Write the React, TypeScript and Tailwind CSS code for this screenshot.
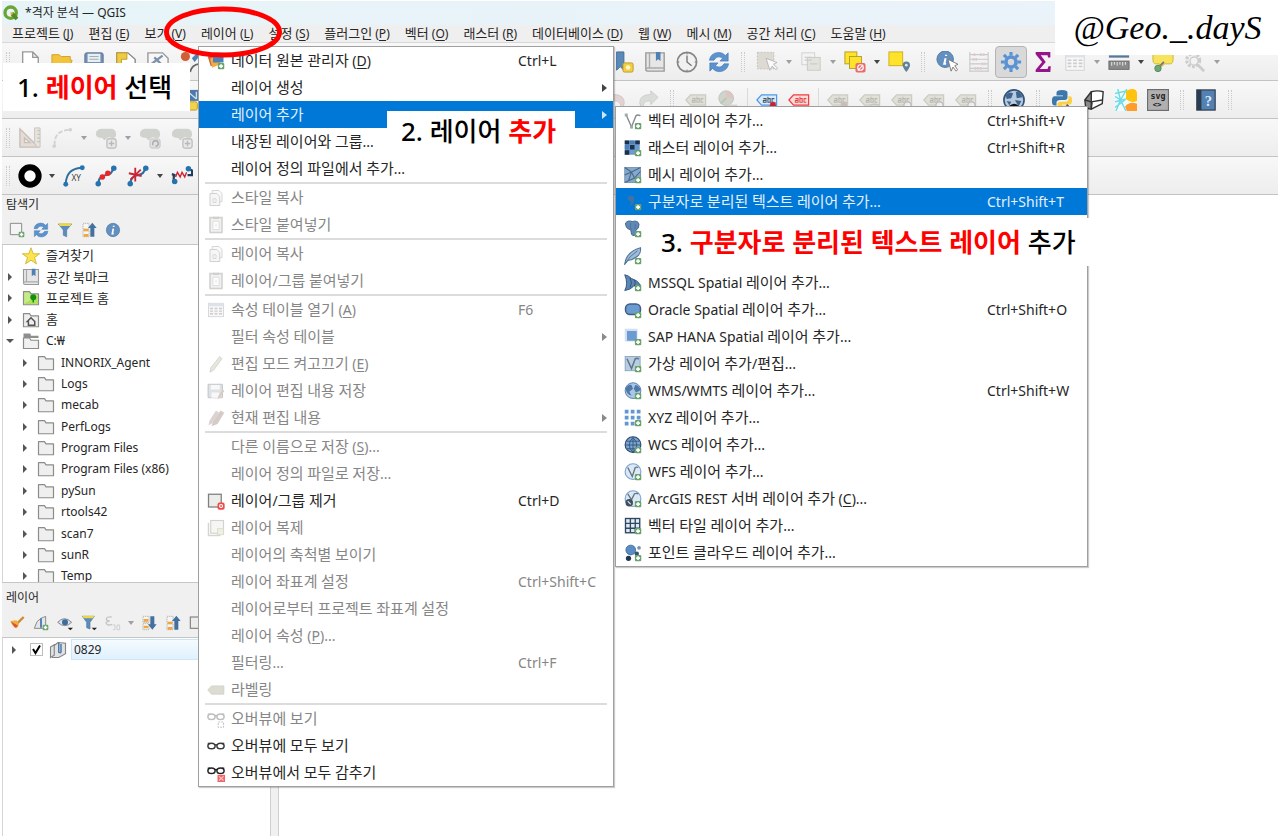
import React, { useState } from "react";

type IconFn = () => React.ReactNode;

/* Small green "add" badge in the lower right corner of a layer icon */
const Plus = () => (
  <>
    <rect x="14.5" y="14.5" width="8.5" height="8.5" rx="1.5" fill="#6aa36c" />
    <path d="M18.75 16.2v5.1M16.2 18.75h5.1" stroke="#fff" strokeWidth="2.2" />
  </>
);

const tag = (fill: string, stroke: string, text: string, extra?: React.ReactNode) => () => (
  <>
    <path d="M1 12 6 6.500h16.500v11H6z" fill={fill} stroke={stroke} strokeWidth="1.3" />
    <path d="M8 10.500h3v4H8v-2h3M13 8.500v6h2.500v-4H13M20 10.500h-2.500v4H20" fill="none" stroke={text} strokeWidth="1.1" />
    {extra}
  </>
);

const folder = (inner?: React.ReactNode, fill = "#efefef") => () => (
  <>
    <path d="M2 3.500h8l2 3h10v14.500H2z" fill={fill} stroke="#8c8c88" strokeWidth="1.6" strokeLinejoin="round" />
    {inner}
  </>
);

const glasses = (c: string, extra?: React.ReactNode) => () => (
  <>
    <path d="M1 5.500h3M20 5.500h3M10.500 8q1.500-1.600 3 0" stroke={c} strokeWidth="2" fill="none" />
    <ellipse cx="6" cy="9" rx="4.800" ry="3.800" fill="none" stroke={c} strokeWidth="2" />
    <ellipse cx="18" cy="9" rx="4.800" ry="3.800" fill="none" stroke={c} strokeWidth="2" />
    {extra}
  </>
);

const globeLines = "M2 12h20M12 2v20M12 2q-10 10 0 20M12 2q10 10 0 20M4 7h16M4 17h16";

const icons: Record<string, IconFn> = {
  newDoc: () => <path d="M4 1h11l6 6v16H4zM15 1v6h6" fill="#fff" stroke="#999" strokeWidth="1.500" />,
  open: () => <path d="M1 4h8l2 2h10v4h2l-3 11H1z" fill="#f3c33c" stroke="#cfa02a" />,
  save: () => (
    <>
      <rect x="2" y="2" width="20" height="20" rx="2" fill="#7190b3" stroke="#56718f" />
      <rect x="5" y="3" width="14" height="9" fill="#e8eef4" />
      <path d="M7 6h10M7 9h10" stroke="#9aa" />
    </>
  ),
  layout: () => (
    <>
      <path d="M2 2h12l8 7v13H2z" fill="#fff" stroke="#888" strokeWidth="1.500" />
      <path d="M2 2h11v7H7v13H2z" fill="#f1cb3f" stroke="#b9982c" />
    </>
  ),
  layoutMgr: () => (
    <>
      <path d="M1 2h16l6 6v14H1z" fill="#f7f7f7" stroke="#999" strokeWidth="1.500" />
      <path d="m5 14 12-9M8 7l9 9" stroke="#7b92a8" strokeWidth="2.500" />
    </>
  ),
  style: () => (
    <>
      <circle cx="7" cy="6" r="5" fill="#cf5f36" />
      <path d="m14 8 6-6 3 3-6 7z" fill="#4b81b4" />
      <path d="M12 23q2-8 10-9" stroke="#666" strokeWidth="2" fill="none" />
    </>
  ),
  bookmarkNew: () => (
    <>
      <path d="M5 1h8v20l-4-4-4 4z" fill="#5c8ab8" stroke="#3f6b97" />
      <rect x="12" y="13" width="11" height="10" rx="1.500" fill="#f4cf3d" stroke="#b9982c" />
      <circle cx="17.500" cy="18" r="2.500" fill="#fff7cf" />
    </>
  ),
  book: () => (
    <>
      <path d="M2 2h20v20H4q-2 0-2-2z" fill="#e6e6e6" stroke="#999" strokeWidth="1.500" />
      <path d="M6 2v17M2 20q0-1.500 2-1.500h18" stroke="#aaa" strokeWidth="1.500" fill="none" />
      <path d="M13 1h5v10l-2.500-2-2.500 2z" fill="#4f80b2" />
    </>
  ),
  clock: () => (
    <>
      <circle cx="12" cy="12" r="10.500" fill="#f1f1f1" stroke="#858585" strokeWidth="1.800" />
      <path d="M12 5v7l5 4M12 2.500v1M12 20.500v1M2.500 12h1M20.500 12h1" stroke="#777" strokeWidth="1.500" fill="none" />
    </>
  ),
  refresh: () => (
    <g fill="#5b93cf" stroke="#4278b5" strokeWidth="0.700">
      <path d="M1.500 10Q3 2 11.500 1.500 16 1.500 19 5l3-3v9h-9l3-3q-6-4-9.500 2z" />
      <path d="M22.500 14q-1.500 8-10 8.500Q8 22.500 5 19l-3 3v-9h9l-3 3q6 4 9.500-2z" />
    </g>
  ),
  select: () => (
    <>
      <rect x="1.500" y="1.500" width="18" height="18" fill="#dcdad3" stroke="#c2c0ba" strokeDasharray="2 1.500" />
      <path d="m11 8 4 13 2.500-4.500 4.500 4 1.500-2-4.500-4 4-2z" fill="#fafafa" stroke="#b5b5b5" />
    </>
  ),
  selectForm: () => (
    <>
      <rect x="2" y="2" width="14" height="13" fill="#f3f3f3" stroke="#cfcfcf" />
      <rect x="8" y="7" width="14" height="14" fill="#e3e2dc" stroke="#c8c8c4" />
      <path d="M5 7h8M5 10h8M11 14h8" stroke="#ccc" strokeWidth="1.500" />
    </>
  ),
  deselect: () => (
    <>
      <rect x="1" y="1" width="13" height="13" fill="#ffe32b" stroke="#b39c22" />
      <rect x="6" y="6" width="13" height="13" fill="#ffe32b" stroke="#b39c22" />
      <rect x="12.500" y="13" width="11" height="10.500" rx="2" fill="#e86a6a" />
      <circle cx="18" cy="18" r="3" fill="none" stroke="#fff" strokeWidth="1.300" />
      <path d="m15 21.500 6-6.500" stroke="#fff" strokeWidth="1.200" />
    </>
  ),
  selectPin: () => (
    <>
      <rect x="1" y="1" width="15" height="15" fill="#ffe32b" stroke="#c9ad22" />
      <path d="M20 23q-4-5-4-7.500a4 4 0 0 1 8 0Q24 18 20 23z" fill="#5f8294" />
      <circle cx="20" cy="15.500" r="1.500" fill="#dfe8ec" />
    </>
  ),
  identify: () => (
    <>
      <circle cx="10" cy="9" r="9" fill="#6490c0" stroke="#4c78a8" />
      <path d="M11 4v1.500M10.500 8l-1.500 6h2" stroke="#fff" strokeWidth="2.200" fill="none" />
      <path d="m13 9 3.500 13 2-4.500 3.500 4.500 1.500-1.500-3-4.500 3.500-1.500z" fill="#fff" stroke="#777" />
    </>
  ),
  abacus: () => (
    <>
      <path d="M2 1v22M22 1v22M2 4h20M2 9h20M2 14h20M2 19h20M2 22h20" stroke="#c9c9c9" strokeWidth="1.200" />
      <path d="M6 4h3M13 4h5M5 9h6M15 14h4M7 19h8" stroke="#dfcaca" strokeWidth="3" strokeDasharray="2 1" />
    </>
  ),
  gear: () => (
    <g fill="none" stroke="#5a93d4">
      <circle cx="12" cy="12" r="5.500" strokeWidth="4" />
      <path d="M12 1v4M12 19v4M1 12h4M19 12h4M4.200 4.200 7 7M17 17l2.800 2.800M4.200 19.800 7 17M17 7l2.800-2.800" strokeWidth="3.400" />
    </g>
  ),
  sigma: () => <path d="M4 1h16v6h-2.500l-.5-2.500H9.500L15 12l-6.500 7.500H17l1-3h2.500L20 23H4v-2.500L11 12 4 3.500z" fill="#96148c" />,
  table: () => (
    <>
      <rect x="2" y="3" width="20" height="18" fill="#f7f7f7" stroke="#ccd0d4" />
      <rect x="2" y="3" width="20" height="4" fill="#dde3e8" />
      <path d="M4 10h4M10 10h4M16 10h4M4 13.500h4M10 13.500h4M16 13.500h4M4 17h4M10 17h4M16 17h4" stroke="#ccc" strokeWidth="1.700" />
    </>
  ),
  measure: () => (
    <>
      <path d="M1 6h22" stroke="#56789b" strokeWidth="2.500" />
      <rect x="1" y="11" width="22" height="9" fill="#8a8a8a" stroke="#666" />
      <path d="M4 12v4M7 12v3M10 12v4M13 12v3M16 12v4M19 12v3" stroke="#ddd" strokeWidth="1.200" />
    </>
  ),
  tip: () => (
    <>
      <path d="M4 0h16q3 0 3 4v5q0 5-3 5h-6l-6 5v-5H4q-3 0-3-5V4q0-4 3-4z" fill="#f8e45c" stroke="#c9b23a" />
      <circle cx="6.500" cy="19" r="3.500" fill="#6fa874" stroke="#4f8a56" />
      <path d="m9 16 4-4" stroke="#777" strokeWidth="2" />
    </>
  ),
  zoomGear: () => (
    <g fill="none" stroke="#cdcdcd">
      <circle cx="10" cy="10" r="7" strokeWidth="3.500" strokeDasharray="3 1.500" />
      <circle cx="11" cy="11" r="4.500" strokeWidth="1.500" />
      <path d="m15 15 7 7" strokeWidth="3" />
    </g>
  ),
  zoomYellow: () => (
    <>
      <circle cx="10" cy="9" r="7" fill="#eee" stroke="#888" strokeWidth="2" />
      <path d="M12 20h9v4h-9z" fill="#f0cf53" />
    </>
  ),
  zoomGreen: () => (
    <>
      <circle cx="10" cy="9" r="7" fill="#eee" stroke="#888" strokeWidth="2" />
      <path d="M14 20h8v4h-8z" fill="#a8c8a8" />
    </>
  ),
  blueYellow: () => (
    <>
      <rect x="7" y="1" width="16" height="12" fill="#4c79aa" />
      <path d="m11 4 8 7M19 3v8" stroke="#cfe0f0" strokeWidth="1.500" />
      <rect x="9" y="14" width="11" height="9" rx="2" fill="#f3d34c" stroke="#b9982c" />
    </>
  ),
  undo: () => <path d="M1 9 9 2v4q12 0 12 9 0 4-4 7 2-10-8-9v4z" fill="#e2d4d4" stroke="#d2c4c4" />,
  redo: () => <path d="M23 9 15 2v4Q3 6 3 15q0 4 4 7-2-10 8-9v4z" fill="#d9dcd9" stroke="#cbcfcb" />,
  labelGrey: tag("#e1e0d8", "#cbcac2", "#b9b8b0"),
  labelMove: tag("#e1e0d8", "#cbcac2", "#b9b8b0", <rect x="15" y="14" width="7" height="7" rx="1" fill="#c9bcbc" />),
  labelShow: tag("#e1e0d8", "#cbcac2", "#b9b8b0", <ellipse cx="17" cy="19" rx="5" ry="2.500" fill="#d6d6d6" stroke="#bbb" />),
  labelCircle: tag("#e1e0d8", "#cbcac2", "#b9b8b0", <circle cx="18" cy="18" r="4" fill="#eee" stroke="#bbb" strokeWidth="1.500" />),
  diagram: () => (
    <>
      <circle cx="10" cy="10" r="8" fill="#d0d3cb" stroke="#bfc2ba" />
      <path d="M10 10V2a8 8 0 0 1 8 8z" fill="#dcc5c2" />
      <path d="M10 10 4 16" stroke="#b5c8b5" strokeWidth="2" />
      <path d="M12 17h10v6H12z" fill="#d5d4cc" />
    </>
  ),
  labelBlue: tag("#d9ebfb", "#4c98e6", "#44576b", <path d="M13.500 23.500q0-5 2-6v-3h6v3q2 1 2 6z" fill="#c32333" />),
  labelRed: tag("#fbdada", "#f03b3b", "#e24b4b"),
  globeDark: () => (
    <>
      <circle cx="12" cy="12" r="11" fill="#b5cbe2" stroke="#31537a" strokeWidth="1.800" />
      <path d="M3 7q4-5 8-2l-2 5-5 1zM14 3q6 0 7 6l-6 1zM13 12l7 1-3 6zM4 13l5 1-2 4z" fill="#41648c" />
      <path d="M4 23q2-6 8-7 6 1 8 7z" fill="#111" />
    </>
  ),
  python: () => (
    <>
      <path d="M12 1q-6 0-6 3v3h7v1H4q-3 0-3 5t3 5h2v-3q0-3 4-3h5q3 0 3-3V4q0-3-6-3z" fill="#3d78aa" />
      <path d="M12 23q6 0 6-3v-2h-6v-1h8q3 0 3-5t-3-4h-1v3q0 3-4 3h-5q-3 0-3 3v3q0 3 5 3z" fill="#fbd046" />
      <path d="m17 17 6 6" stroke="#555" strokeWidth="2" />
    </>
  ),
  eraser: () => (
    <g stroke="#333" strokeWidth="1.500" strokeLinejoin="round">
      <path d="M9 3q7-2 13 0l-1 13-12 6z" fill="#fff" />
      <path d="M9 3 2 12l1 9 6 1z" fill="#888" />
      <path d="m2 12 7 2 12-2M10 14l-1 8" fill="none" />
    </g>
  ),
  mapTiles: () => (
    <>
      <rect x="0" y="0" width="24" height="24" fill="#f2fbfc" />
      <path d="m0 5 13-3M0 14l12-3M3 0l3 12-5 12M13 0 6 12l6 12M0 20l11-8M0 8l6 4" stroke="#6edbe6" strokeWidth="1.600" />
      <path d="M12 3q2-3 7-3 5 0 5 5v8q-7 3-12-2z" fill="#ffc20e" />
      <path d="M11 19q5-6 13-3v8H13z" fill="#ff9c2a" />
    </>
  ),
  svgBox: () => (
    <>
      <rect x="0.500" y="0.500" width="23" height="23" fill="#b0b0b0" stroke="#6d6d6d" strokeWidth="1.500" />
      <text x="12" y="11" fontSize="9" fontWeight="700" textAnchor="middle" fill="#222" fontFamily="DejaVu Sans Mono, monospace">svg</text>
      <text x="11" y="20" fontSize="8" fontWeight="700" textAnchor="middle" fill="#222" fontFamily="DejaVu Sans Mono, monospace">&lt;&gt;</text>
    </>
  ),
  help: () => (
    <>
      <rect x="2" y="1" width="20" height="22" fill="#5381b4" stroke="#333f4d" strokeWidth="1.300" />
      <rect x="2" y="1" width="5" height="22" fill="#2b3c50" />
      <text x="14.500" y="18" fontSize="16" fontWeight="700" textAnchor="middle" fill="#dfeaf5" fontFamily="Liberation Serif, serif">?</text>
    </>
  ),
  setSquare: () => (
    <>
      <path d="M1 2v20h20zM6 12v5h6z" fill="#e6dcd6" fillRule="evenodd" stroke="#c8beb8" strokeWidth="1.500" />
      <path d="M17 1h6v21h-3l-3-4z" fill="#e6e2dc" stroke="#c8c4be" />
      <path d="M20 4h3M20 8h3M20 12h3M20 16h3" stroke="#bbb" />
    </>
  ),
  curve: () => (
    <>
      <path d="M4 20Q3 4 20 3" fill="none" stroke="#d2d2d2" strokeWidth="2" strokeDasharray="5 2" />
      <circle cx="3.500" cy="21" r="2" fill="#d2d2d2" />
      <circle cx="21" cy="3" r="2" fill="#d2d2d2" />
    </>
  ),
  blobAdd: () => (
    <>
      <path d="M1 8q0-6 7-6h9q6 0 6 6 0 5-5 4-4-2-6 1-2 3-4-1-7 0-7-4z" fill="#d0d2ce" />
      <rect x="13" y="13" width="10" height="10" rx="2" fill="#e8e8e8" stroke="#b9b9b9" strokeWidth="1.300" />
      <path d="M18 15v6M15 18h6" stroke="#b9b9b9" strokeWidth="1.500" />
    </>
  ),
  blobTurn: () => (
    <>
      <path d="M1 8q0-6 7-6h9q6 0 6 6 0 5-5 4-4-2-6 1-2 3-4-1-7 0-7-4z" fill="#d0d2ce" />
      <rect x="12" y="13" width="11" height="10" rx="2" fill="#e0e0e0" stroke="#c2c2c2" />
      <path d="M15 20v-2a3 3 0 1 1 3 3" stroke="#aaa" strokeWidth="1.500" fill="none" />
    </>
  ),
  ring: () => <circle cx="12" cy="12" r="8" fill="#fff" stroke="#000" strokeWidth="5.500" />,
  curveXY: () => (
    <>
      <path d="M3 20Q4 4 20 3" fill="none" stroke="#2f6f9f" strokeWidth="2" />
      <circle cx="3" cy="21" r="2.700" fill="#2475ad" />
      <circle cx="21" cy="3" r="2.700" fill="#2475ad" />
      <text x="14.500" y="17" fontSize="9" textAnchor="middle" fill="#444" fontFamily="Noto Sans, sans-serif">XY</text>
    </>
  ),
  curveRed: () => (
    <>
      <path d="M4 21q-1-8 8-10 7-1 8-8" fill="none" stroke="#2f6f9f" strokeWidth="2.200" />
      <circle cx="3.500" cy="20.500" r="3" fill="#2475ad" />
      <circle cx="20.500" cy="3.500" r="3" fill="#2475ad" />
      <circle cx="8" cy="13" r="3" fill="#ee2424" />
      <circle cx="14" cy="9" r="3" fill="#ee2424" />
    </>
  ),
  curveCross: () => (
    <>
      <path d="M4 21q-1-8 8-10 7-1 8-8" fill="none" stroke="#2f6f9f" strokeWidth="2.200" />
      <circle cx="3.500" cy="20.500" r="3" fill="#2475ad" />
      <circle cx="20.500" cy="3.500" r="3" fill="#2475ad" />
      <path d="M9 3v15M2 9l14 3M15 5 4 16" stroke="#cf2333" strokeWidth="2" />
    </>
  ),
  zigzag: () => (
    <>
      <path d="M3 17v-6h2M18 11h5V6l-4-2M4 11l-3-1" fill="none" stroke="#1f3f5c" strokeWidth="2.400" />
      <circle cx="4" cy="18" r="3" fill="#2475ad" />
      <circle cx="19" cy="4" r="3" fill="#2475ad" />
      <path d="m5 13 2-5 3 5 2-5 3 5 2-5" fill="none" stroke="#cf2333" strokeWidth="1.500" />
    </>
  ),
  addLayer: () => (
    <>
      <path d="M2 2h17v17H2z" fill="#f4f4f4" stroke="#8c8c8c" strokeWidth="1.500" />
      <Plus />
    </>
  ),
  funnel: () => (
    <>
      <path d="M2 3h20l-7.500 9v10l-5-2v-8z" fill="#5d8bbb" stroke="#4a78a8" />
      <path d="M2 2h20l-2 4H4z" fill="#e8d84e" />
    </>
  ),
  funnelMenu: () => (
    <>
      <path d="M2 2h18l-6.500 9v10l-5-2v-8z" fill="#5d8bbb" stroke="#4a78a8" />
      <path d="M2 1h18l-2 4H4z" fill="#e8d84e" />
      <path d="m16 19 8 0-4 4z" fill="#222" />
    </>
  ),
  collapse: () => (
    <>
      <path d="M3 2h9v9H3zM3 13h9v9H3z" fill="#f6f6f6" stroke="#999" strokeDasharray="2 1" />
      <path d="M4 10h7v4H4zM4 18h7v4H4z" fill="#f2a63c" />
      <path d="m17 1 6.500 8h-3.500v13h-6V9h-3.500z" fill="#43719f" />
    </>
  ),
  expand: () => (
    <>
      <path d="M3 2h9v9H3zM3 13h9v9H3z" fill="#f6f6f6" stroke="#999" strokeDasharray="2 1" />
      <path d="M4 6h7v4H4zM4 16h7v4H4z" fill="#f2a63c" />
      <path d="m17 22 6.500-8h-3.500V2h-6v12h-3.500z" fill="#43719f" />
    </>
  ),
  info: () => (
    <>
      <circle cx="12" cy="12" r="10" fill="#6490c0" stroke="#4c78a8" />
      <path d="M13 5.500v2M12.500 10l-1.500 7.500h2" stroke="#fff" strokeWidth="2.500" fill="none" />
    </>
  ),
  star: () => <path d="m12 1 3 8h8.500l-6.800 5 2.600 8.500L12 17.500l-7.300 5L7.300 14 .5 9H9z" fill="#fbe44c" stroke="#c6a927" strokeLinejoin="round" />,
  folder: folder(),
  folderProject: folder(
    <>
      <path d="m3 20 18-12v12z" fill="#aee05e" />
      <circle cx="15" cy="11" r="4" fill="#119011" />
      <path d="M15 14v4" stroke="#119011" strokeWidth="2" />
    </>,
    "#c6ea86",
  ),
  folderHome: folder(<path d="m7 14 5-5 5 5v5H8.500v-5z" fill="none" stroke="#555" strokeWidth="2" />),
  folderOpen: () => (
    <>
      <path d="M2 2h9l1 3h10v3H2z" fill="#8e8e8a" />
      <path d="M2 8h8l2 3h10v11H2z" fill="#f1f1f1" stroke="#8c8c88" strokeWidth="1.600" />
    </>
  ),
  brush: () => (
    <>
      <path d="M22 3 12 13" stroke="#c98c30" strokeWidth="3.500" />
      <path d="m2 9 9-1 4 5-3 7q-6 0-10-11z" fill="#f0ac3e" />
      <path d="m3 10 6 9 5-3" fill="#dd4f35" />
    </>
  ),
  groupAdd: () => (
    <>
      <path d="m2 20 4-10 6-5 7-3v18z" fill="#e6e6e6" stroke="#8c8c8c" strokeWidth="1.500" />
      <path d="M12 5v14" stroke="#5585b5" strokeWidth="3" />
      <Plus />
    </>
  ),
  eye: () => (
    <>
      <path d="M1 11q10-11 21 0-10 10-21 0z" fill="#d9e2ea" stroke="#889" strokeWidth="1.500" />
      <circle cx="12" cy="11" r="4.500" fill="#3f6b99" />
      <path d="m16 19 8 0-4 4z" fill="#222" />
    </>
  ),
  epsilon: () => (
    <>
      <path d="M10 3q-8-1-8 3.500Q2 9 7 9-1 10 3 14q3 2 8 0" fill="none" stroke="#c4c4c4" strokeWidth="2" />
      <path d="M12 15h3v7h-3M22 15h-4v7h4z" fill="none" stroke="#cfcfcf" strokeWidth="1.500" />
    </>
  ),
  removeLayer: () => (
    <>
      <rect x="2" y="3" width="17" height="17" fill="#ececea" stroke="#7f7f7f" strokeWidth="1.700" />
      <rect x="14" y="14" width="9.500" height="9.500" rx="2.500" fill="#ee4b4b" />
      <circle cx="18.700" cy="18.700" r="2" fill="none" stroke="#fff" strokeWidth="1.500" />
    </>
  ),
  group: () => (
    <>
      <path d="m2 8 5-3v14l-5 3zM7 6l5-4 10 1v14l-9 5H4" fill="#e1e3e4" stroke="#858585" strokeWidth="1.500" />
      <path d="M13 2v13q3 2 3-1V4" fill="none" stroke="#4d7ba6" strokeWidth="2" />
    </>
  ),
  dataSource: () => (
    <>
      <path d="m1 6 12-4 4 13-12 4z" fill="#cf5f36" />
      <path d="m4 9 11-5 3 12-11 5z" fill="#f1ad43" />
      <rect x="8" y="1" width="14" height="13" fill="#4f80b5" />
      <Plus />
    </>
  ),
  copy: () => (
    <>
      <path d="M7 2h9l4 4v11H7z" fill="#fafafa" stroke="#d5d5d5" strokeWidth="1.300" />
      <path d="M4 6h9l4 4v12H4z" fill="#f6f6f6" stroke="#d0d0d0" strokeWidth="1.300" />
      <path d="M8 13h4v5H8z" fill="none" stroke="#d0d0d0" />
    </>
  ),
  paste: () => (
    <>
      <path d="M4 2h16v20H4z" fill="#f1f1f1" stroke="#d0d0cc" strokeWidth="2" />
      <path d="M8 7h8v11H8zM12 10v5" fill="#fff" stroke="#d5d5d5" />
      <path d="M8 1h8v3H8z" fill="#d0d0cc" />
    </>
  ),
  pencil: () => <path d="m17 2 3 3L9 20l-5 3 1-6z" fill="#e6e5de" stroke="#cfcec8" />,
  pencils: () => (
    <>
      <path d="m12 2 4 3L7 19l-5 3 1-6z" fill="#dcd3d1" />
      <path d="m18 2 5 3-9 15-8 3 2-6z" fill="#d4cac8" />
    </>
  ),
  saveEdits: () => (
    <>
      <rect x="1.500" y="3" width="19" height="18" rx="1" fill="#dfe2e4" stroke="#c5c8ca" strokeWidth="1.500" />
      <path d="M5 4h12v6H5zM6 14h10v7H6z" fill="#f8f8f8" />
      <path d="m21 10 2 2-6 9-3 2 1-4z" fill="#e0c8c2" />
    </>
  ),
  duplicate: () => (
    <>
      <path d="M2 5v17h16" fill="none" stroke="#d5d5d2" strokeWidth="2" />
      <rect x="5" y="2" width="17" height="17" fill="#f6f6f4" stroke="#d2d2ce" strokeWidth="1.500" />
      <rect x="14" y="13" width="8" height="8" fill="#eef0e4" stroke="#d5d8c6" />
    </>
  ),
  label: () => <path d="M1 12 6 6.500h16.500v11H6z" fill="#dddcd3" stroke="#cfcec5" />,
  glassesOff: glasses("#bdbdbd", <rect x="15" y="16" width="7" height="7" fill="none" stroke="#c5c5c5" strokeWidth="1.500" strokeDasharray="2.500 1.500" />),
  glasses: () => <g transform="translate(0 3)">{glasses("#3a3a3a")()}</g>,
  glassesHide: glasses(
    "#222",
    <>
      <rect x="14" y="14.500" width="10" height="9.500" fill="#f06464" />
      <path d="m16 16.500 6 5.500M22 16.500 16 22" stroke="#fcc" strokeWidth="1.400" />
    </>,
  ),
  vector: () => (
    <>
      <path d="m3 4 7 16 6-15q2-2 6 0" fill="none" stroke="#82898f" strokeWidth="1.800" />
      <path d="M1 2h4v4H1zM8 18h4v4H8z" fill="#a4abb0" />
      <Plus />
    </>
  ),
  raster: () => (
    <>
      <rect x="1" y="2" width="20" height="19" fill="#6b9bd0" />
      <path d="M1 2h6v5H1zM15 2h6v5h-6zM8 8h6v6H8zM1 15h6v6H1z" fill="#1d3149" />
      <path d="M8 2h6v5H8zM1 8h6v6H1z" fill="#4f7fb8" />
      <Plus />
    </>
  ),
  mesh: () => (
    <>
      <rect x="1" y="2" width="21" height="20" fill="#86a8cb" stroke="#6787a8" />
      <path d="m1 12 9-4 12-6M10 8l4 8 8-9M1 22l13-6M1 2l9 6-4 12" fill="none" stroke="#46688c" strokeWidth="1.400" />
      <Plus />
    </>
  ),
  comma: () => (
    <>
      <path d="M5 5q8-4 9 3 0 7-7 10 3-4 2-7-5-1-4-6z" fill="#3f72a6" />
      <Plus />
    </>
  ),
  elephant: () => (
    <>
      <path d="M2 4q3-4 9-2 8-2 9 4 0 6-4 7l-1 7q-4 2-5-1l-1-6q-7-1-7-9z" fill="#6089b5" stroke="#3f6690" strokeWidth="1.300" />
      <path d="M9 4q-2 6 1 9M15 5q1 4-1 7" fill="none" stroke="#4a719b" strokeWidth="1.200" />
      <Plus />
    </>
  ),
  feather: () => (
    <>
      <path d="M1 23Q3 6 22 1q1 8-5 12-5 4-12 5z" fill="#9dbbd8" stroke="#4e7398" strokeWidth="1.400" />
      <path d="M1 23Q7 12 18 5" stroke="#4e7398" strokeWidth="1.200" fill="none" />
      <Plus />
    </>
  ),
  mssql: () => (
    <>
      <path d="M1 1q5 1 9 5 8 2 12 9l-9 1q-4 5-12 6 5-9 0-21z" fill="#5a86b5" stroke="#36597f" strokeWidth="1.300" />
      <path d="M8 5q4 7 0 13M14 8q2 4 0 8" fill="none" stroke="#2f4e70" strokeWidth="1.200" />
      <Plus />
    </>
  ),
  oracle: () => (
    <>
      <rect x="2" y="4" width="20" height="14" rx="6" fill="#6b9bd0" stroke="#3f5f84" strokeWidth="2" />
      <Plus />
    </>
  ),
  hana: () => (
    <>
      <rect x="1" y="1" width="17" height="17" fill="#cfe0f1" />
      <rect x="4" y="4" width="13" height="13" fill="#6b9bd0" />
      <Plus />
    </>
  ),
  virtual: () => (
    <>
      <rect x="1.500" y="2" width="20" height="19" fill="#b8cde0" stroke="#7b98b5" />
      <path d="m4 5 6 13 5-13q2-1 5 0" fill="none" stroke="#5f7589" strokeWidth="2" />
      <Plus />
    </>
  ),
  wms: () => (
    <>
      <circle cx="12" cy="11.500" r="10.500" fill="#a9c6e6" stroke="#5c84b0" strokeWidth="1.300" />
      <path d="M2 8q5-6 8-4l2 5-5 4 3 5q-7-1-8-10zM15 4q6 1 7 7l-6 3-3-5z" fill="#4f78a6" />
      <Plus />
    </>
  ),
  xyz: () => (
    <>
      <path d="M1 1h5v5H1zM9 1h5v5H9zM17 1h5v5h-5zM1 9h5v5H1zM9 9h5v5H9zM17 9h5v5h-5zM1 17h5v5H1zM9 17h5v5H9z" fill="#6496cf" />
      <Plus />
    </>
  ),
  wcs: () => (
    <>
      <circle cx="12" cy="11.500" r="10.500" fill="#7ba5d2" stroke="#2b4767" strokeWidth="1.500" />
      <path d={globeLines} fill="none" stroke="#2f4f73" strokeWidth="1.100" />
      <Plus />
    </>
  ),
  wfs: () => (
    <>
      <circle cx="12" cy="11.500" r="10.500" fill="#dbe8f5" stroke="#7ba3d0" strokeWidth="1.500" />
      <path d="m5 6 6 12 4-12q2-1 4 0" fill="none" stroke="#66737f" strokeWidth="1.800" />
      <Plus />
    </>
  ),
  arcgis: () => (
    <>
      <circle cx="12" cy="11.500" r="10.500" fill="#dbe8f5" stroke="#7ba3d0" strokeWidth="1.500" />
      <path d="m5 5 5 8 4-8q2-1 5 0" fill="none" stroke="#66737f" strokeWidth="1.800" />
      <circle cx="7" cy="17" r="5" fill="#3f4f5e" />
      <path d="m5 15 4 4" stroke="#cfe0f0" strokeWidth="1.500" />
      <Plus />
    </>
  ),
  vectorTile: () => (
    <>
      <rect x="2" y="2" width="19" height="19" fill="#dfeaf5" stroke="#2f4760" strokeWidth="1.800" />
      <path d="M8.500 2v19M15 2v19M2 8.500h19M2 15h19" stroke="#2f4760" strokeWidth="1.800" />
      <Plus />
    </>
  ),
  pointCloud: () => (
    <>
      <circle cx="9" cy="8" r="6.500" fill="#5a8cc6" stroke="#35608f" />
      <circle cx="6" cy="19" r="3.500" fill="#1f3550" />
      <circle cx="20" cy="5" r="2.500" fill="#7b93ad" />
      <circle cx="17" cy="13" r="3" fill="#35537a" />
      <Plus />
    </>
  ),
};

function Icon({ name, className = "size-6" }: { name: string; className?: string }) {
  return (
    <svg viewBox="0 0 24 24" className={`block shrink-0 ${className}`} fill="none" aria-hidden="true">
      {icons[name]()}
    </svg>
  );
}

/* Renders Hangul slightly larger than Latin text; "&" marks the access key. */
function Label({ text, hangul }: { text: string; hangul: string }) {
  return (
    <span className="whitespace-pre">
      {text.split(/([가-힣]+|&.)/).map((part, i) => {
        if (part.startsWith("&")) return <u key={i} className="underline-offset-2">{part.slice(1)}</u>;
        if (/[가-힣]/.test(part)) return <span key={i} className={hangul}>{part}</span>;
        return part;
      })}
    </span>
  );
}

const Grip = ({ className = "w-4" }: { className?: string }) => (
  <span className={`flex shrink-0 justify-center ${className}`}>
    <span className="h-5 w-1 border-x border-dotted border-[#c9c9c9]" />
  </span>
);

const Arrow = ({ dark = false }: { dark?: boolean }) => (
  <span className="flex w-3 shrink-0 justify-center">
    <svg viewBox="0 0 6 4" className="h-1 w-1.5" aria-hidden="true">
      <path d="M0 0h6L3 4z" fill={dark ? "#444" : "#a0a0a0"} />
    </svg>
  </span>
);

const Divider = () => <span className="mx-[3px] h-6 w-px shrink-0 bg-[#dadada]" />;

function Tools({ items }: { items: string[] }) {
  return (
    <>
      {items.map((item, i) => {
        if (item === "|") return <Grip key={i} />;
        if (item === "/") return <Divider key={i} />;
        if (item === "v") return <Arrow key={i} />;
        if (item === "V") return <Arrow key={i} dark />;
        const active = item === "gear";
        return (
          <button
            key={i}
            type="button"
            aria-label={item}
            className={`flex h-8 w-8 shrink-0 items-center justify-center rounded-sm ${active ? "border border-[#b4b4b4] bg-[#d9d9d9]" : ""}`}
          >
            <Icon name={item} className={item === "ring" ? "size-[26px]" : "size-[22px]"} />
          </button>
        );
      })}
    </>
  );
}

const rowClass = "flex h-[38px] items-center overflow-hidden border-b border-[#c3c3c3] bg-linear-to-b from-[#f8f8f8] to-[#ededed]";

const menuBar = [
  "프로젝트 (&J)", "편집 (&E)", "보기 (&V)", "레이어 (&L)", "설정 (&S)", "플러그인 (&P)", "벡터 (&O)",
  "래스터 (&R)", "데이터베이스 (&D)", "웹 (&W)", "메시 (&M)", "공간 처리 (&C)", "도움말 (&H)",
];

type Item = { t: string; i?: string; k?: string; off?: boolean; sub?: boolean; on?: boolean };

const layerMenu: Item[][] = [
  [
    { t: "데이터 원본 관리자 (&D)", i: "dataSource", k: "Ctrl+L" },
    { t: "레이어 생성", sub: true },
    { t: "레이어 추가", sub: true, on: true },
    { t: "내장된 레이어와 그룹..." },
    { t: "레이어 정의 파일에서 추가..." },
  ],
  [
    { t: "스타일 복사", i: "copy", off: true },
    { t: "스타일 붙여넣기", i: "paste", off: true },
  ],
  [
    { t: "레이어 복사", i: "copy", off: true },
    { t: "레이어/그룹 붙여넣기", i: "paste", off: true },
  ],
  [
    { t: "속성 테이블 열기 (&A)", i: "table", k: "F6", off: true },
    { t: "필터 속성 테이블", off: true, sub: true },
    { t: "편집 모드 켜고끄기 (&E)", i: "pencil", off: true },
    { t: "레이어 편집 내용 저장", i: "saveEdits", off: true },
    { t: "현재 편집 내용", i: "pencils", off: true, sub: true },
  ],
  [
    { t: "다른 이름으로 저장 (&S)...", off: true },
    { t: "레이어 정의 파일로 저장...", off: true },
    { t: "레이어/그룹 제거", i: "removeLayer", k: "Ctrl+D" },
    { t: "레이어 복제", i: "duplicate", off: true },
    { t: "레이어의 축척별 보이기", off: true },
    { t: "레이어 좌표계 설정", k: "Ctrl+Shift+C", off: true },
    { t: "레이어로부터 프로젝트 좌표계 설정", off: true },
    { t: "레이어 속성 (&P)...", off: true },
    { t: "필터링...", k: "Ctrl+F", off: true },
    { t: "라벨링", i: "label", off: true },
  ],
  [
    { t: "오버뷰에 보기", i: "glassesOff", off: true },
    { t: "오버뷰에 모두 보기", i: "glasses" },
    { t: "오버뷰에서 모두 감추기", i: "glassesHide" },
  ],
];

const addMenu: Item[] = [
  { t: "벡터 레이어 추가...", i: "vector", k: "Ctrl+Shift+V" },
  { t: "래스터 레이어 추가...", i: "raster", k: "Ctrl+Shift+R" },
  { t: "메시 레이어 추가...", i: "mesh" },
  { t: "구분자로 분리된 텍스트 레이어 추가...", i: "comma", k: "Ctrl+Shift+T", on: true },
  { t: "", i: "elephant" },
  { t: "", i: "feather" },
  { t: "MSSQL Spatial 레이어 추가...", i: "mssql" },
  { t: "Oracle Spatial 레이어 추가...", i: "oracle", k: "Ctrl+Shift+O" },
  { t: "SAP HANA Spatial 레이어 추가...", i: "hana" },
  { t: "가상 레이어 추가/편집...", i: "virtual" },
  { t: "WMS/WMTS 레이어 추가...", i: "wms", k: "Ctrl+Shift+W" },
  { t: "XYZ 레이어 추가...", i: "xyz" },
  { t: "WCS 레이어 추가...", i: "wcs" },
  { t: "WFS 레이어 추가...", i: "wfs" },
  { t: "ArcGIS REST 서버 레이어 추가 (&C)...", i: "arcgis" },
  { t: "벡터 타일 레이어 추가...", i: "vectorTile" },
  { t: "포인트 클라우드 레이어 추가...", i: "pointCloud" },
];

function MenuItem({ item, keyWidth }: { item: Item; keyWidth: string }) {
  const tone = item.on ? "bg-[#0078d7] text-[#e4f0fb]" : item.off ? "text-[#868686]" : "text-[#262626]";
  return (
    <button
      type="button"
      role="menuitem"
      disabled={item.off}
      aria-label={item.t ? undefined : item.i}
      className={`flex h-[27px] w-full items-center pl-2 text-left text-sm leading-5 ${tone}`}
    >
      <span className="mr-1.5 flex w-[18px] shrink-0">{item.i && <Icon name={item.i} className="size-[18px]" />}</span>
      <span className="flex-1">
        <Label text={item.t} hangul="text-[15px]" />
      </span>
      <span className={`flex shrink-0 items-center ${keyWidth}`}>
        <span className="flex-1">{item.k}</span>
        {item.sub && (
          <svg viewBox="0 0 5 8" className="mr-1.5 h-2 w-[5px]" aria-hidden="true">
            <path d="M0 0v8l5-4z" fill={item.on ? "#cfe4f7" : item.off ? "#8a8a8a" : "#444"} />
          </svg>
        )}
      </span>
    </button>
  );
}

type Node = { t: string; i: string; deep?: boolean; state?: "open" | "closed" };

const tree: Node[] = [
  { t: "즐겨찾기", i: "star" },
  { t: "공간 북마크", i: "book", state: "closed" },
  { t: "프로젝트 홈", i: "folderProject", state: "closed" },
  { t: "홈", i: "folderHome", state: "closed" },
  { t: "C:₩", i: "folderOpen", state: "open" },
  ...["INNORIX_Agent", "Logs", "mecab", "PerfLogs", "Program Files", "Program Files (x86)", "pySun", "rtools42", "scan7", "sunR", "Temp"].map(
    (t): Node => ({ t, i: "folder", deep: true, state: "closed" }),
  ),
];

const Twisty = ({ state }: { state?: "open" | "closed" }) => (
  <svg viewBox="0 0 8 8" className="size-2 shrink-0" aria-hidden="true">
    {state === "closed" && <path d="M2 0v8l4-4z" fill="#555" />}
    {state === "open" && <path d="M0 2h8L4 6z" fill="#555" />}
  </svg>
);

function PanelTools({ items }: { items: string[] }) {
  return (
    <div className="flex h-[30px] items-center overflow-hidden border-b border-[#c6c6c6] pl-[3px]">
      {items.map((item, i) =>
        item === "v" ? (
          <Arrow key={i} />
        ) : (
          <button key={i} type="button" aria-label={item} className="flex h-6 w-6 shrink-0 items-center justify-center">
            <Icon name={item} className="size-4" />
          </button>
        ),
      )}
    </div>
  );
}

const menuFrame = "absolute border border-[#9f9f9f] bg-white shadow-[1px_1px_1px_rgba(0,0,0,0.2)]";
const callout = "absolute flex items-center bg-white text-[26px] leading-8 font-medium text-black whitespace-pre";

export default function App() {
  const [visible, setVisible] = useState(true);

  return (
    <div className="relative flex min-h-screen flex-col overflow-hidden bg-white px-0.5 pt-px font-['Noto_Sans','Noto_Sans_CJK_KR',sans-serif] text-[#262626]">
      <header>
        <div className="flex h-6 items-center gap-1.5 bg-linear-to-r from-[#e6f4f7] to-[#ebf2fb] pl-px text-xs leading-4">
          <svg viewBox="0 0 24 24" className="size-4" aria-hidden="true">
            <circle cx="11.500" cy="11.500" r="8.500" fill="none" stroke="#6ba535" strokeWidth="5" />
            <path d="m12 12 4-1 7 8-4 4-7-7z" fill="#4f8c2a" />
            <path d="m11 11 5 1-4 4z" fill="#f0a52c" />
          </svg>
          <h1>
            <Label text="*격자 분석 — QGIS" hangul="text-xs" />
          </h1>
        </div>
        <nav className="flex h-[18px] items-center gap-[15px] border-b border-[#d8d8d8] bg-[#efefef] pl-2.5">
          {menuBar.map((m) => (
            <button key={m} type="button" className="shrink-0 text-xs leading-4">
              <Label text={m} hangul="text-[13px]" />
            </button>
          ))}
        </nav>
        <div className={rowClass}>
          <Grip className="w-3" />
          <Tools items={["newDoc", "open", "save", "layout", "layoutMgr", "style"]} />
          <div className="ml-[401px] flex items-center">
            <Tools
              items={[
                "bookmarkNew", "book", "clock", "refresh", "|", "select", "v", "selectForm", "v", "deselect", "V", "selectPin", "|",
                "identify", "abacus", "gear", "sigma", "table", "v", "measure", "V", "tip", "zoomGear", "v",
              ]}
            />
          </div>
        </div>
        <div className={rowClass}>
          <Grip className="w-3" />
          <Tools items={["zoomGreen", "zoomYellow", "zoomYellow", "zoomYellow", "zoomYellow", "blueYellow"]} />
          <div className="ml-[394px] flex items-center">
            <Tools
              items={[
                "undo", "redo", "|", "labelGrey", "diagram", "/", "labelBlue", "labelRed", "/", "labelMove", "labelShow", "labelCircle",
                "labelCircle", "labelCircle", "|", "globeDark", "|", "python", "eraser", "mapTiles", "svgBox", "|", "help", "|",
              ]}
            />
          </div>
        </div>
        <div className={rowClass}>
          <Grip className="w-3" />
          <Tools items={["setSquare", "curve", "v", "blobAdd", "v", "blobTurn", "blobAdd"]} />
        </div>
        <div className={rowClass}>
          <Grip className="w-3" />
          <Tools items={["ring", "V", "curveXY", "curveRed", "curveCross", "V", "zigzag"]} />
        </div>
      </header>

      <div className="flex flex-1">
        <aside className="flex w-[268px] shrink-0 flex-col bg-[#f0f0f0] text-xs leading-4">
          <h2 className="h-5 pt-0.5 pl-1">탐색기</h2>
          <PanelTools items={["addLayer", "refresh", "funnel", "collapse", "info"]} />
          <div className="h-[337px] overflow-hidden border-l border-[#d5d5d5] bg-white">
            <ul className="flex h-[342px] flex-col">
              {tree.map((n) => (
                <li key={n.t} className={`flex flex-1 items-center ${n.deep ? "pl-[18px]" : "pl-[3px]"}`}>
                  <Twisty state={n.state} />
                  <Icon name={n.i} className="mr-1.5 ml-2 size-[18px]" />
                  <Label text={n.t} hangul="text-[13px]" />
                </li>
              ))}
            </ul>
          </div>
          <div className="h-1.5 border-t border-[#c6c6c6]" />
          <h2 className="h-5 pt-0.5 pl-1">레이어</h2>
          <PanelTools items={["brush", "groupAdd", "eye", "funnelMenu", "epsilon", "v", "expand", "collapse", "removeLayer"]} />
          <div className="flex-1 border-l border-[#d5d5d5] bg-white pt-px">
            <div className="flex h-[21px] items-center pl-[7px]">
              <Twisty state="closed" />
              <span className="relative ml-3 size-[13px]">
                <input
                  id="layer-0829"
                  type="checkbox"
                  checked={visible}
                  onChange={(e) => setVisible(e.target.checked)}
                  className="block size-[13px] appearance-none border border-[#bdbdbd] bg-white"
                />
                {visible && (
                  <svg viewBox="0 0 13 13" className="pointer-events-none absolute inset-0" aria-hidden="true">
                    <path d="m3 6 2.500 4L10 2.500" fill="none" stroke="#000" strokeWidth="2" />
                  </svg>
                )}
              </span>
              <Icon name="group" className="mr-1 ml-1.5 size-[18px]" />
              <label htmlFor="layer-0829" className="flex h-[21px] flex-1 items-center border border-[#cde6f7] bg-linear-to-b from-[#f5fbff] to-[#dff1fd] pl-0.5">
                0829
              </label>
            </div>
          </div>
        </aside>
        <div className="w-[9px] shrink-0 border-x border-[#cfcfcf] bg-[#f0f0f0]" />
        <main className="flex-1 bg-white" />
      </div>

      <div role="menu" className={`${menuFrame} top-[46px] left-[198px] w-[416px]`}>
        {layerMenu.map((group, g) => (
          <React.Fragment key={g}>
            {g > 0 && <hr className="mx-1.5 h-0.5 border-0 bg-[#dcdcdc]" />}
            {group.map((item) => (
              <MenuItem key={item.t} item={item} keyWidth="w-[95px]" />
            ))}
          </React.Fragment>
        ))}
      </div>

      <div role="menu" className={`${menuFrame} top-[106px] left-[615px] w-[473px]`}>
        {addMenu.map((item, i) => (
          <MenuItem key={i} item={item} keyWidth="w-[100px]" />
        ))}
      </div>

      <p className={`${callout} top-[63px] left-[3px] h-12 w-[187px] pl-3.5`}>
        1. <span className="font-bold text-[#f00]">레이어</span> 선택
      </p>
      <p className={`${callout} top-[111px] left-[387px] h-10 w-[188px] pl-3.5`}>
        2. 레이어 <span className="font-bold text-[#f00]">추가</span>
      </p>
      <p className={`${callout} top-[218px] left-[647px] h-12 w-[443px] pl-3.5`}>
        3. <span className="font-bold text-[#f00]">구분자로 분리된 텍스트 레이어</span> 추가
      </p>

      <svg viewBox="0 0 120 54" className="absolute top-[5px] left-[163px] h-[54px] w-[120px]" aria-hidden="true">
        <ellipse cx="60" cy="27" rx="56.500" ry="23" fill="none" stroke="#f00" strokeWidth="5" />
      </svg>

      <p className="absolute top-0 right-0 flex h-[55px] w-[225px] items-center justify-center bg-white font-['Liberation_Serif',serif] text-[34px] leading-10 text-black italic">
        @Geo._.dayS
      </p>
    </div>
  );
}
